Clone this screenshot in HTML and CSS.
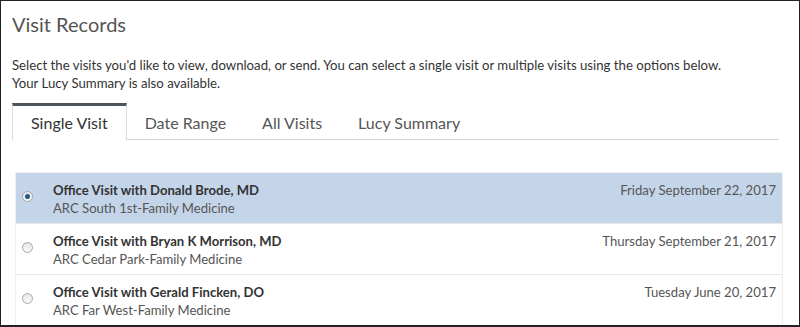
FILE: index.html
```html
<!DOCTYPE html>
<html lang="en">
<head>
    <meta charset="UTF-8">
    <title>Visit Records</title>
    <link rel="stylesheet" href="styles.css">
</head>
<body>
<div class="frame">
    <h1>Visit Records</h1>
    <p class="intro">Select the visits you'd like to view, download, or send. You can select a single visit or multiple visits using the options below.<br>Your Lucy Summary is also available.</p>

    <ul class="tab">
        <li class="active">Single Visit</li>
        <li>Date Range</li>
        <li>All Visits</li>
        <li>Lucy Summary</li>
    </ul>

    <div class="visits">
        <label class="visit selected">
            <span class="radio on"></span>
            <span class="info">
                <b>Office Visit with Donald Brode, MD</b>
                <span class="place">ARC South 1st-Family Medicine</span>
            </span>
            <span class="date">Friday September 22, 2017</span>
        </label>
        <label class="visit">
            <span class="radio"></span>
            <span class="info">
                <b>Office Visit with Bryan K Morrison, MD</b>
                <span class="place">ARC Cedar Park-Family Medicine</span>
            </span>
            <span class="date">Thursday September 21, 2017</span>
        </label>
        <label class="visit">
            <span class="radio"></span>
            <span class="info">
                <b>Office Visit with Gerald Fincken, DO</b>
                <span class="place">ARC Far West-Family Medicine</span>
            </span>
            <span class="date">Tuesday June 20, 2017</span>
        </label>
    </div>
</div>
</body>
</html>
```

FILE: styles.css
```css
* {
    margin: 0;
    padding: 0;
    box-sizing: border-box;
}
ul, li {
    list-style: none;
}
body {
    font-family: "Source Sans Pro", Lato, "Liberation Sans", sans-serif;
    color: #333;
    background: #fff;
}
.frame {
    width: 800px;
    height: 327px;
    overflow: hidden;
    border: 1px solid #222;
    border-bottom-width: 2px;
    padding: 0 16px 0 11px;
}
h1 {
    font-size: 20px;
    font-weight: normal;
    color: #555;
    line-height: 28px;
    margin-top: 9px;
}
.intro {
    font-size: 13.2px;
    line-height: 18px;
    margin-top: 18px;
    color: #333;
}
.tab {
    display: flex;
    margin-top: 11px;
    height: 37px;
    border-bottom: 1px solid #cfd6df;
    margin-right: 4px;
}
.tab li {
    padding: 0 18px;
    height: 36px;
    line-height: 33px;
    font-size: 16px;
    color: #555;
    border-top: 3px solid transparent;
}
.tab .active {
    height: 37px;
    border-top-color: #4d555c;
    border-left: 1px solid #dcdcdc;
    border-right: 1px solid #dcdcdc;
    background: #fff;
    color: #333;
}
.visits {
    margin-top: 32px;
    margin-left: 3px;
    border: 1px solid #eceef0;
    border-bottom: 0;
}
.visit {
    display: flex;
    align-items: flex-start;
    height: 51px;
    border-bottom: 1px solid #e8e8e8;
    padding: 8px 6px 0 6px;
    font-size: 13.1px;
}
.visit.selected {
    background: #c4d5ea;
}
.radio {
    width: 11px;
    height: 11px;
    border-radius: 50%;
    border: 1px solid #a7a7a7;
    background: linear-gradient(#e6e6e6, #fafafa);
    margin: 10px 20px 0 0;
    flex: none;
    position: relative;
}
.radio.on::after {
    content: "";
    position: absolute;
    left: 2px;
    top: 2px;
    width: 5px;
    height: 5px;
    border-radius: 50%;
    background: #1f5d86;
}
.info {
    flex: 1;
    display: flex;
    flex-direction: column;
    line-height: 18px;
}
.info b {
    color: #333;
}
.place {
    color: #555;
}
.date {
    color: #555;
    line-height: 18px;
}
```
